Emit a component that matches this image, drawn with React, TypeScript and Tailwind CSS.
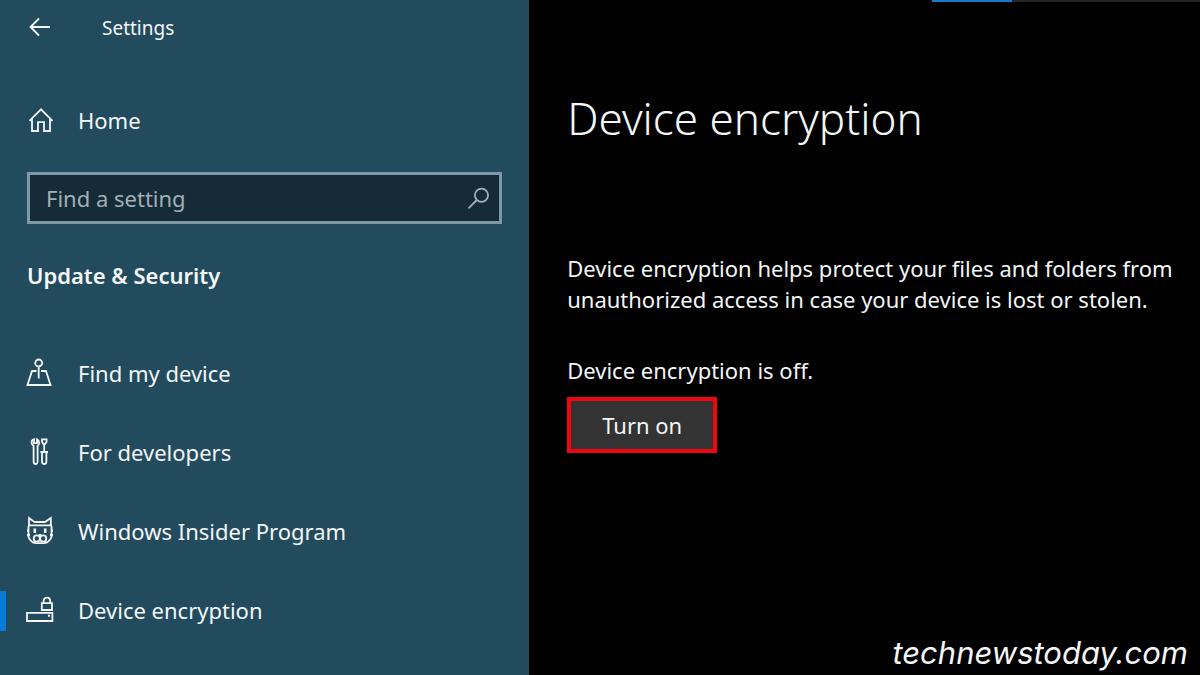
import type { ReactNode } from "react"

function Icon({ children }: { children: ReactNode }) {
  return (
    <svg
      viewBox="0 0 28 28"
      className="h-7 w-7 shrink-0 overflow-visible"
      fill="none"
      stroke="currentColor"
      strokeWidth="1.8"
      aria-hidden="true"
    >
      {children}
    </svg>
  )
}

const navItems = [
  {
    title: "Find my device",
    icon: (
      <Icon>
        <circle cx="12.7" cy="3" r="3.5" />
        <path d="M12.7 6.5V18.5M10.5 11H6L1.5 25H24.5L20 11H15" />
      </Icon>
    ),
  },
  {
    title: "For developers",
    icon: (
      <Icon>
        <path d="M8 .3C6 1 5.4 2.8 5.6 4.2C5.8 5.5 7 6.3 7.6 6.8V22.5C7.6 25.8 11.6 25.8 11.6 22.5V6.8C12.4 6 13.2 5.2 13.2 4.2C13.2 2.6 12.4 1 11 .3V4.2H8Z" />
        <path d="M16 .3H20.6V2.8L19 5.2H17.4L16 2.8ZM18.2 5.2V13M14.4 13H22M16 13V22.5C16 25.8 20.4 25.8 20.4 22.5V13" />
      </Icon>
    ),
  },
  {
    title: "Windows Insider Program",
    icon: (
      <Icon>
        <path d="M3 8V0L8.5 4H19L24.8 0V8M2 7.3H26M2.5 8V17M25.5 8V17M1 12.5H3M25 12.5H27M1 17H4M24 17H27M2 17C3 22.5 7 25 10 25.2H18C21 25 25 22.5 26 17" />
        <path d="M8.8 10.5V15M19.2 10.5V15" strokeWidth="2.6" />
        <path d="M12.5 17H15.5" strokeWidth="2" />
        <circle cx="10.8" cy="20.5" r="3.1" />
        <circle cx="17.2" cy="20.5" r="3.1" />
      </Icon>
    ),
  },
  {
    title: "Device encryption",
    active: true,
    icon: (
      <Icon>
        <path d="M1 15.8H26.4V24H1ZM15.8 6.2H26V13H15.8ZM17.6 6V4C17.6-.6 24.2-.6 24.2 4V6" />
        <path d="M22 18.8H24" strokeWidth="2" />
      </Icon>
    ),
  },
]

function Sidebar() {
  return (
    <aside className="w-[44.1%] shrink-0 bg-[#224b5e]">
      <header className="flex h-14 items-center gap-12 pl-[26px]">
        <button type="button" aria-label="Back">
          <Icon>
            <path d="M13 4.5L4.5 13L13 21.5M4.5 13H24" />
          </Icon>
        </button>
        <h1 className="text-[19px]">Settings</h1>
      </header>

      <a href="#home" className="mt-9 flex h-14 items-center gap-6 pl-[26px]">
        <Icon>
          <path d="M3.5 14.8L15 3.3L26.5 14.8M6 13V25H12V16.2H18V25H24V13" />
        </Icon>
        <span>Home</span>
      </a>

      <label className="mx-[27px] mt-6 flex h-[52px] items-center border-3 border-[#7c99a8] bg-[#152b37] pr-[6px] pl-4 text-[#a3afb6]">
        <input
          type="text"
          aria-label="Find a setting"
          placeholder="Find a setting"
          className="min-w-0 flex-1 bg-transparent outline-none placeholder:text-[#a3afb6]"
        />
        <Icon>
          <circle cx="16.5" cy="11.2" r="6.6" />
          <path d="M11.8 16L3.5 24.3" />
        </Icon>
      </label>

      <h2 className="mt-9 pl-[27px] font-semibold">Update &amp; Security</h2>

      <nav className="mt-[43px]">
        {navItems.map((item) => (
          <a
            key={item.title}
            href="#"
            aria-current={item.active ? "page" : undefined}
            className="relative flex h-[79px] items-center gap-6 pl-[26px]"
          >
            {item.active && <span className="absolute left-0 h-10 w-[6px] bg-[#0a7cd8]" />}
            {item.icon}
            <span>{item.title}</span>
          </a>
        ))}
      </nav>
    </aside>
  )
}

export default function App() {
  return (
    <div className="flex min-h-screen bg-black font-['Noto_Sans','Open_Sans',sans-serif] text-[22px] leading-[31px] text-[#f4f6f7]">
      <Sidebar />
      <main className="relative flex flex-1 flex-col pl-[38px]">
        <div className="absolute top-0 right-0 flex h-[2px] w-2/5">
          <span className="w-[30%] bg-[#1679ca]" />
          <span className="flex-1 bg-[#252525]" />
        </div>
        <h2 className="mt-[87px] text-[44px] leading-[62px] font-light">Device encryption</h2>
        <p className="mt-[104px] pr-6">
          Device encryption helps protect your files and folders from unauthorized access in case your device is lost or
          stolen.
        </p>
        <p className="mt-10">Device encryption is off.</p>
        <button
          type="button"
          className="mt-[11px] h-14 w-[150px] border-4 border-[#ee0710] bg-[#333333]"
        >
          Turn on
        </button>
        <footer className="mt-auto pr-3 pb-1 text-right font-['Inter',sans-serif] text-[31px] leading-9 italic">
          technewstoday.com
        </footer>
      </main>
    </div>
  )
}
